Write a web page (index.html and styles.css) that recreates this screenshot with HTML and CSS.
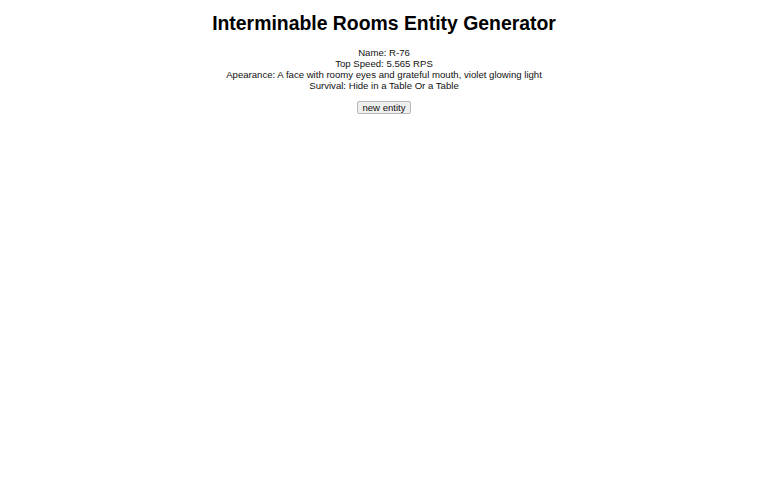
FILE: index.html
```html
<!DOCTYPE html>
<html>
<head>
<meta charset="utf-8">
<title>Interminable Rooms Entity Generator</title>
<link rel="stylesheet" href="styles.css">
</head>
<body>
<main class="generator">
  <h1 class="title">Interminable Rooms Entity Generator</h1>
  <div class="entity">
    <div class="field">Name: R-76</div>
    <div class="field">Top Speed: 5.565 RPS</div>
    <div class="field">Apearance: A face with roomy eyes and grateful mouth, violet glowing light</div>
    <div class="field">Survival: Hide in a Table Or a Table</div>
  </div>
  <button class="new-btn" type="button">new entity</button>
</main>
</body>
</html>
```
FILE: styles.css
```css
html, body {
  background: #fff;
}
body {
  margin: 5px;
  font-family: "Liberation Sans", Arial, sans-serif;
  font-size: 9.6px;
  color: #111;
}
.generator {
  display: flex;
  flex-direction: column;
  align-items: center;
  text-align: center;
}
.title {
  font-size: 19.4px;
  line-height: 22px;
  font-weight: bold;
  color: #000;
  margin: 7px 0 13px;
}
.entity {
  display: flex;
  flex-direction: column;
  line-height: 11px;
}
.new-btn {
  margin-top: 10px;
  font-family: "Liberation Sans", Arial, sans-serif;
  font-size: 9.6px;
  line-height: 11px;
  padding: 0 4px;
  background: #efefef;
  border: 1px solid #b8b8b8;
  border-radius: 2px;
  color: #111;
}
```
